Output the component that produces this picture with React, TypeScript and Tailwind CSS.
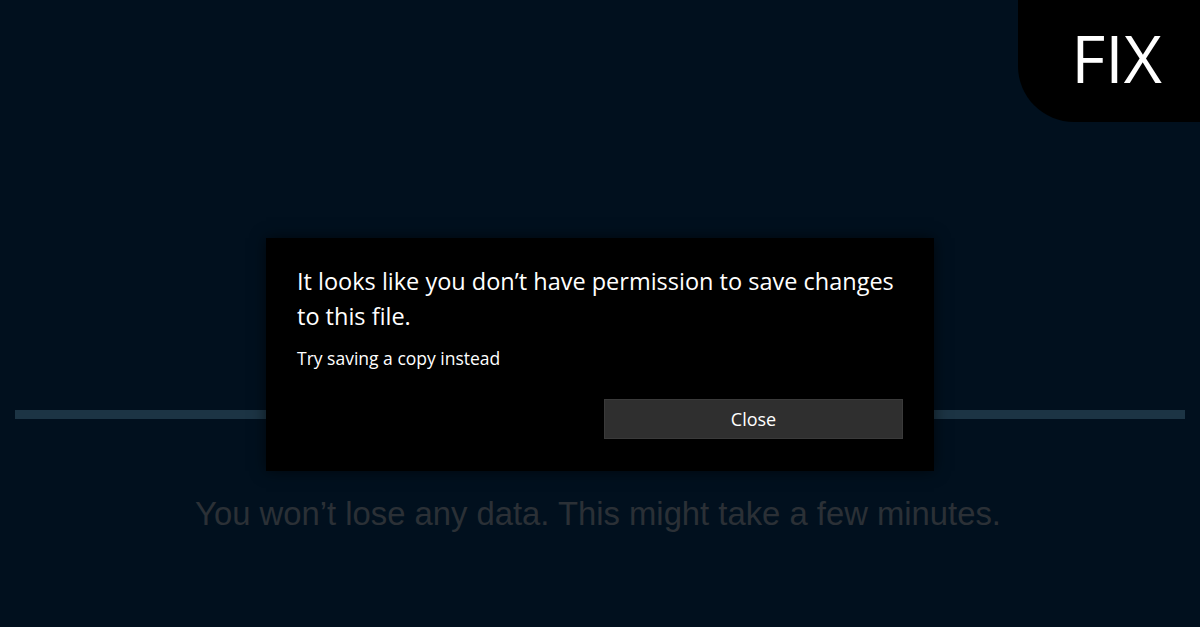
export default function App() {
  return (
    <div className="relative h-[627px] w-[1200px] overflow-hidden bg-[#01101e] font-['Liberation_Sans',Arial,sans-serif]">
      <div className="pt-[410px] px-[15px]">
        <div className="h-[9px] bg-[#1c3444]" />
        <p className="mt-[77px] pr-[4px] text-center text-[32.8px] leading-[36px] text-[#2b3036]">
          You won’t lose any data. This might take a few minutes.
        </p>
      </div>

      {/* FIX badge */}
      <div className="absolute right-0 top-0 flex h-[122px] w-[182px] items-center justify-center rounded-bl-[56px] bg-black pl-[15px] pb-[8px]">
        <span className="font-['Open_Sans',sans-serif] text-[66px] font-normal leading-none text-white">FIX</span>
      </div>

      {/* dialog */}
      <div className="absolute left-[266px] top-[238px] w-[668px] bg-black px-[31px] pt-[26px] pb-[32px] shadow-[0_0_14px_rgba(0,0,0,0.6)] font-['Open_Sans',sans-serif]">
        <h1 className="text-[23.5px] leading-[35px] text-white">
          It looks like you don’t have permission to save changes to this file.
        </h1>
        <p className="mt-[12px] text-[17.5px] leading-[24px] text-white">Try saving a copy instead</p>
        <div className="mt-[29px] flex justify-end">
          <button className="h-[40px] w-[299px] border border-[#3a3a3a] bg-[#2f2f2f] text-[18px] text-white">Close</button>
        </div>
      </div>
    </div>
  );
}
